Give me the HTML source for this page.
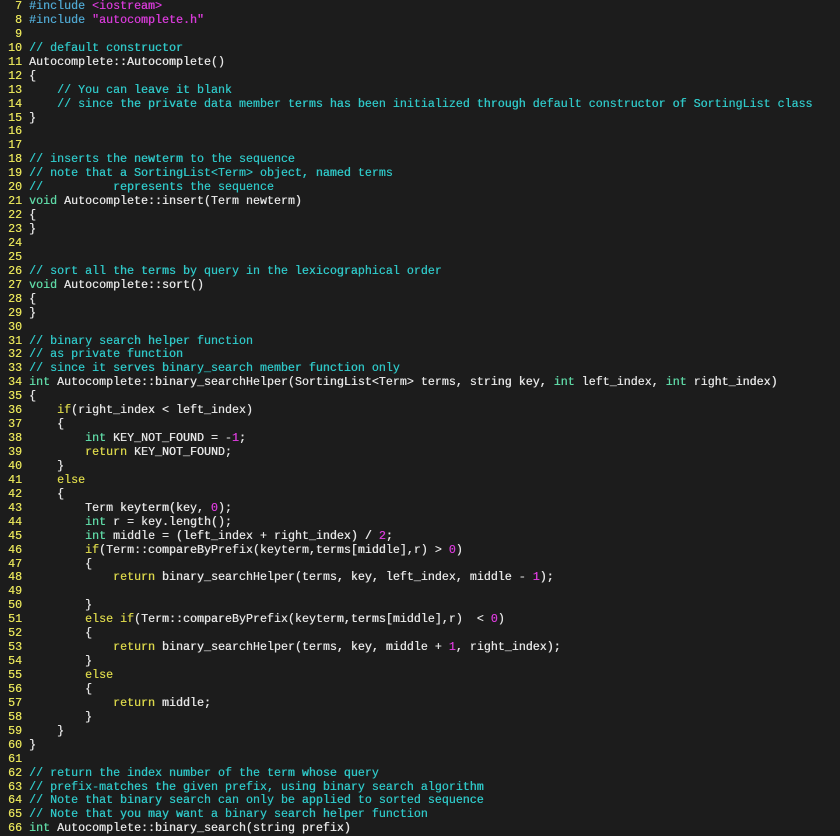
<!DOCTYPE html>
<html><head><meta charset="utf-8"><style>
html,body{margin:0;padding:0;background:#1c1c1c;width:840px;height:836px;overflow:hidden}
pre{margin:0;padding:0 0 0 8px;font-family:"Liberation Mono",monospace;font-size:11.67px;line-height:13.93px;color:#e4e4e4;white-space:pre;position:relative;top:0;text-shadow:0.3px 0 0 currentColor}
.n{color:#e6e35a}.c{color:#2fc6c6}.p{color:#4fa6cf}.s{color:#d53ad6}.k{color:#d9d54a}.t{color:#5fd9a6}
</style></head><body><pre><span class="n"> 7 </span><span class="p">#include</span> <span class="s">&lt;iostream&gt;</span>
<span class="n"> 8 </span><span class="p">#include</span> <span class="s">"autocomplete.h"</span>
<span class="n"> 9 </span>
<span class="n">10 </span><span class="c">// default constructor</span>
<span class="n">11 </span>Autocomplete::Autocomplete()
<span class="n">12 </span>{
<span class="n">13 </span>    <span class="c">// You can leave it blank</span>
<span class="n">14 </span>    <span class="c">// since the private data member terms has been initialized through default constructor of SortingList class</span>
<span class="n">15 </span>}
<span class="n">16 </span>
<span class="n">17 </span>
<span class="n">18 </span><span class="c">// inserts the newterm to the sequence</span>
<span class="n">19 </span><span class="c">// note that a SortingList&lt;Term&gt; object, named terms</span>
<span class="n">20 </span><span class="c">//          represents the sequence</span>
<span class="n">21 </span><span class="t">void</span> Autocomplete::insert(Term newterm)
<span class="n">22 </span>{
<span class="n">23 </span>}
<span class="n">24 </span>
<span class="n">25 </span>
<span class="n">26 </span><span class="c">// sort all the terms by query in the lexicographical order</span>
<span class="n">27 </span><span class="t">void</span> Autocomplete::sort()
<span class="n">28 </span>{
<span class="n">29 </span>}
<span class="n">30 </span>
<span class="n">31 </span><span class="c">// binary search helper function</span>
<span class="n">32 </span><span class="c">// as private function</span>
<span class="n">33 </span><span class="c">// since it serves binary_search member function only</span>
<span class="n">34 </span><span class="t">int</span> Autocomplete::binary_searchHelper(SortingList&lt;Term&gt; terms, string key, <span class="t">int</span> left_index, <span class="t">int</span> right_index)
<span class="n">35 </span>{
<span class="n">36 </span>    <span class="k">if</span>(right_index &lt; left_index)
<span class="n">37 </span>    {
<span class="n">38 </span>        <span class="t">int</span> KEY_NOT_FOUND = -<span class="s">1</span>;
<span class="n">39 </span>        <span class="k">return</span> KEY_NOT_FOUND;
<span class="n">40 </span>    }
<span class="n">41 </span>    <span class="k">else</span>
<span class="n">42 </span>    {
<span class="n">43 </span>        Term keyterm(key, <span class="s">0</span>);
<span class="n">44 </span>        <span class="t">int</span> r = key.length();
<span class="n">45 </span>        <span class="t">int</span> middle = (left_index + right_index) / <span class="s">2</span>;
<span class="n">46 </span>        <span class="k">if</span>(Term::compareByPrefix(keyterm,terms[middle],r) &gt; <span class="s">0</span>)
<span class="n">47 </span>        {
<span class="n">48 </span>            <span class="k">return</span> binary_searchHelper(terms, key, left_index, middle - <span class="s">1</span>);
<span class="n">49 </span>
<span class="n">50 </span>        }
<span class="n">51 </span>        <span class="k">else</span> <span class="k">if</span>(Term::compareByPrefix(keyterm,terms[middle],r)  &lt; <span class="s">0</span>)
<span class="n">52 </span>        {
<span class="n">53 </span>            <span class="k">return</span> binary_searchHelper(terms, key, middle + <span class="s">1</span>, right_index);
<span class="n">54 </span>        }
<span class="n">55 </span>        <span class="k">else</span>
<span class="n">56 </span>        {
<span class="n">57 </span>            <span class="k">return</span> middle;
<span class="n">58 </span>        }
<span class="n">59 </span>    }
<span class="n">60 </span>}
<span class="n">61 </span>
<span class="n">62 </span><span class="c">// return the index number of the term whose query</span>
<span class="n">63 </span><span class="c">// prefix-matches the given prefix, using binary search algorithm</span>
<span class="n">64 </span><span class="c">// Note that binary search can only be applied to sorted sequence</span>
<span class="n">65 </span><span class="c">// Note that you may want a binary search helper function</span>
<span class="n">66 </span><span class="t">int</span> Autocomplete::binary_search(string prefix)</pre></body></html>
